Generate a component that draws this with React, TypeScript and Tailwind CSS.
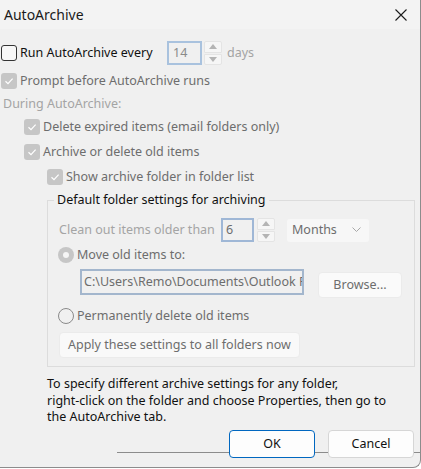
import React from 'react'

const font = { fontFamily: '"Noto Sans", "Liberation Sans", sans-serif' }

function Check({ on, disabled }: { on?: boolean; disabled?: boolean }) {
  if (on && disabled) {
    return (
      <span className="flex h-[16px] w-[16px] shrink-0 items-center justify-center rounded-[3px] bg-[#c6c6c6]">
        <svg width="10" height="10" viewBox="0 0 10 10">
          <path d="M1.5 5.2 L4 7.6 L8.6 2.6" fill="none" stroke="#ffffff" strokeWidth="1.2" />
        </svg>
      </span>
    )
  }
  return <span className="h-[16px] w-[16px] shrink-0 rounded-[3px] border border-[#333333] bg-[#f7f7f7]" />
}

function Radio({ on }: { on?: boolean }) {
  if (on) {
    return (
      <span className="flex h-[16px] w-[16px] shrink-0 items-center justify-center rounded-full bg-[#c6c6c6]">
        <span className="h-[6px] w-[6px] rounded-full bg-[#f5f5f5]" />
      </span>
    )
  }
  return <span className="h-[16px] w-[16px] shrink-0 rounded-full border border-[#8a8a8a]" />
}

function Spinner() {
  return (
    <div className="flex h-[24px] w-[18px] flex-col gap-px">
      <div className="flex flex-1 items-center justify-center rounded-t-[2px] border border-[#e4e4e4] bg-[#f6f6f6]">
        <svg width="8" height="5" viewBox="0 0 8 5"><path d="M0 5 L4 0 L8 5 Z" fill="#b4b4b4" /></svg>
      </div>
      <div className="flex flex-1 items-center justify-center rounded-b-[2px] border border-[#e4e4e4] bg-[#f6f6f6]">
        <svg width="8" height="5" viewBox="0 0 8 5"><path d="M0 0 L4 5 L8 0 Z" fill="#b4b4b4" /></svg>
      </div>
    </div>
  )
}

export default function App() {
  return (
    <div style={font} className="h-[469px] w-[421px] overflow-hidden bg-white text-[12.5px] leading-[16px]">
      <div className="flex h-[468px] flex-col rounded-br-[8px] border-b border-r border-[#8c8c8c] bg-[#f0f0f0]">
        {/* title bar */}
        <div className="flex h-[29px] shrink-0 items-center justify-between bg-[#f3f3f3] pl-[4px] pr-[13px]">
          <span className="text-[14px] text-[#1a1a1a]">AutoArchive</span>
          <svg width="12" height="12" viewBox="0 0 12 12">
            <path d="M0.5 0.5 L11.5 11.5 M11.5 0.5 L0.5 11.5" stroke="#1a1a1a" strokeWidth="1.1" />
          </svg>
        </div>

        {/* run every */}
        <div className="mt-[12px] flex h-[24px] items-center pl-[1px]">
          <Check />
          <span className="ml-[3px] w-[147px] text-[#111111]">Run AutoArchive every</span>
          <div className="flex h-[24px] w-[35px] items-center border-2 border-[#a9c2de] pl-[4px] text-[#8a8a8a]">14</div>
          <div className="ml-[2px]"><Spinner /></div>
          <span className="ml-[5px] text-[#a4a4a4]">days</span>
        </div>

        <div className="mt-[8px] flex h-[16px] items-center pl-[1px]">
          <Check on disabled />
          <span className="ml-[3px] text-[#6d6d6d]">Prompt before AutoArchive runs</span>
        </div>

        <div className="mt-[7px] h-[16px] pl-[3px] text-[#a4a4a4]">During AutoArchive:</div>

        <div className="mt-[7px] flex h-[16px] items-center pl-[24px]">
          <Check on disabled />
          <span className="ml-[3px] text-[#6d6d6d]">Delete expired items (email folders only)</span>
        </div>

        <div className="mt-[9px] flex h-[16px] items-center pl-[24px]">
          <Check on disabled />
          <span className="ml-[3px] text-[#6d6d6d]">Archive or delete old items</span>
        </div>

        <div className="mt-[9px] flex h-[16px] items-center pl-[47px]">
          <Check on disabled />
          <span className="ml-[3px] text-[#6d6d6d]">Show archive folder in folder list</span>
        </div>

        {/* group box */}
        <fieldset className="ml-[47px] mt-[7px] w-[368px] border border-[#dcdcdc] px-[6px] pb-[8px]">
          <legend className="px-[3px] text-[#111111]">Default folder settings for archiving</legend>
          <div className="ml-[5px] mt-[10px] flex h-[24px] items-center">
            <span className="w-[162px] text-[#a4a4a4]">Clean out items older than</span>
            <div className="flex h-[24px] w-[33px] items-center border-2 border-[#9fb7d6] pl-[3px] text-[#6d6d6d]">6</div>
            <div className="ml-[3px]"><Spinner /></div>
            <div className="ml-[12px] flex h-[23px] w-[82px] items-center justify-between rounded-[3px] bg-[#f7f7f7] pl-[5px] pr-[8px] text-[#6d6d6d]">
              <span>Months</span>
              <svg width="9" height="6" viewBox="0 0 9 6"><path d="M0.5 0.5 L4.5 4.5 L8.5 0.5" fill="none" stroke="#a8a8a8" strokeWidth="1" /></svg>
            </div>
          </div>

          <div className="ml-[4px] mt-[5px] flex h-[16px] items-center">
            <Radio on />
            <span className="ml-[3px] text-[#6d6d6d]">Move old items to:</span>
          </div>

          <div className="ml-[26px] mt-[6px] flex items-start">
            <div className="h-[26px] w-[224px] overflow-hidden whitespace-nowrap border-2 border-[#a3b6cd] pl-[2px] leading-[22px] text-[#6d6d6d]">
              C:\Users\Remo\Documents\Outlook F
            </div>
            <div className="ml-[14px] mt-[3px] flex h-[26px] w-[84px] items-center justify-center rounded-[4px] border border-[#ebebeb] bg-[#fafafa] text-[#6d6d6d]">
              Browse...
            </div>
          </div>

          <div className="ml-[4px] mt-[10px] flex h-[16px] items-center">
            <Radio />
            <span className="ml-[3px] text-[#6d6d6d]">Permanently delete old items</span>
          </div>

          <div className="ml-[5px] mt-[8px] flex h-[26px] w-[241px] items-center rounded-[4px] border border-[#ebebeb] bg-[#f9f9f9] pl-[8px] text-[#6d6d6d]">
            Apply these settings to all folders now
          </div>
        </fieldset>

        <p className="ml-[47px] mt-[9px] text-[#111111] leading-[16.5px]">
          To specify different archive settings for any folder,
          <br />
          right-click on the folder and choose Properties, then go to
          <br />
          the AutoArchive tab.
        </p>

        {/* buttons */}
        <div className="relative mt-[4px] flex h-[28px] items-center">
          <div className="absolute left-[117px] right-0 top-[22px] h-px bg-[#8c8c8c]" />
          <div className="relative ml-[229px] flex h-[28px] w-[86px] items-center justify-center rounded-[4px] border border-[#0067c0] bg-[#fdfdfd] text-[#111111]">
            OK
          </div>
          <div className="relative ml-[13px] flex h-[28px] w-[86px] items-center justify-center rounded-[4px] border border-[#d6d6d6] bg-[#fdfdfd] text-[#111111]">
            Cancel
          </div>
        </div>
      </div>
    </div>
  )
}
